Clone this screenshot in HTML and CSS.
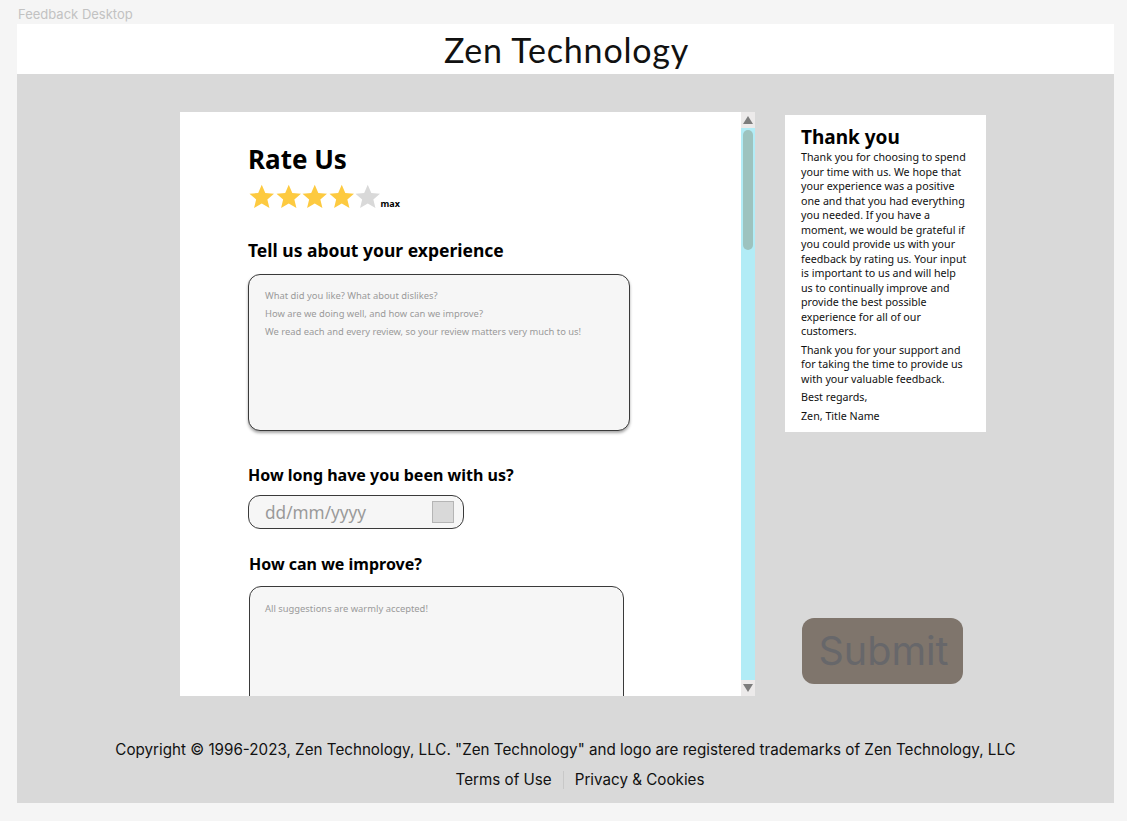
FILE: index.html
```html
<!DOCTYPE html>
<html lang="en">
<head>
    <meta charset="UTF-8">
    <meta name="viewport" content="width=device-width, initial-scale=1.0">
    <title>Feedback Desktop</title>
    <link rel="stylesheet" href="styles.css">
</head>
<body>
    <div class="frame-label">Feedback Desktop</div>
    <div class="frame">
        <div class="site-header">
            <h1>Zen Technology</h1>
        </div>

        <div class="main">
            <div class="form-panel">
                <div class="form-content">
                    <h2 class="rate-title">Rate Us</h2>
                    <div class="stars">
                        <svg class="star on" viewBox="0 0 24 24"><path d="M12 1.5l3.1 7.2 7.6.6-5.8 5 1.8 7.6L12 17.9l-6.7 4 1.8-7.6-5.8-5 7.6-.6z"/></svg>
                        <svg class="star on" viewBox="0 0 24 24"><path d="M12 1.5l3.1 7.2 7.6.6-5.8 5 1.8 7.6L12 17.9l-6.7 4 1.8-7.6-5.8-5 7.6-.6z"/></svg>
                        <svg class="star on" viewBox="0 0 24 24"><path d="M12 1.5l3.1 7.2 7.6.6-5.8 5 1.8 7.6L12 17.9l-6.7 4 1.8-7.6-5.8-5 7.6-.6z"/></svg>
                        <svg class="star on" viewBox="0 0 24 24"><path d="M12 1.5l3.1 7.2 7.6.6-5.8 5 1.8 7.6L12 17.9l-6.7 4 1.8-7.6-5.8-5 7.6-.6z"/></svg>
                        <svg class="star" viewBox="0 0 24 24"><path d="M12 1.5l3.1 7.2 7.6.6-5.8 5 1.8 7.6L12 17.9l-6.7 4 1.8-7.6-5.8-5 7.6-.6z"/></svg>
                        <span class="max">max</span>
                    </div>

                    <h3 class="question q-experience">Tell us about your experience</h3>
                    <div class="textbox experience">
                        <p>What did you like? What about dislikes?</p>
                        <p>How are we doing well, and how can we improve?</p>
                        <p>We read each and every review, so your review matters very much to us!</p>
                    </div>

                    <h3 class="question small q-long">How long have you been with us?</h3>
                    <div class="date-box">
                        <span>dd/mm/yyyy</span>
                        <span class="date-btn"></span>
                    </div>

                    <h3 class="question small q-improve">How can we improve?</h3>
                    <div class="textbox improve">
                        <p>All suggestions are warmly accepted!</p>
                    </div>
                </div>
                <div class="scrollbar">
                    <div class="arrow up"></div>
                    <div class="track">
                        <div class="thumb"></div>
                    </div>
                    <div class="arrow down"></div>
                </div>
            </div>

            <div class="side">
                <div class="thanks">
                    <h2>Thank you</h2>
                    <p>Thank you for choosing to spend your time with us. We hope that your experience was a positive one and that you had everything you needed. If you have a moment, we would be grateful if you could provide us with your feedback by rating us. Your input is important to us and will help us to continually improve and provide the best possible experience for all of our customers.</p>
                    <p>Thank you for your support and for taking the time to provide us with your valuable feedback.</p>
                    <p>Best regards,</p>
                    <p>Zen, Title Name</p>
                </div>
                <button class="submit-btn">Submit</button>
            </div>
        </div>

        <div class="site-footer">
            <p class="copyright">Copyright © 1996-2023, Zen Technology, LLC. "Zen Technology" and logo are registered trademarks of Zen Technology, LLC</p>
            <div class="links">
                <a href="#">Terms of Use</a>
                <span class="sep"></span>
                <a href="#">Privacy &amp; Cookies</a>
            </div>
        </div>
    </div>
</body>
</html>
```

FILE: styles.css
```css
body {
    margin: 0;
    background: #f5f5f5;
    font-family: 'Noto Sans', sans-serif;
}
.frame-label {
    font-family: 'Inter', sans-serif;
    font-size: 13px;
    color: #c2c2c2;
    padding: 6px 0 0 18px;
    height: 18px;
}
.frame {
    margin-left: 17px;
    width: 1097px;
    height: 779px;
    background: #d9d9d9;
    display: flex;
    flex-direction: column;
}
.site-header {
    height: 50px;
    background: white;
    display: flex;
    align-items: center;
    justify-content: center;
}
.site-header h1 {
    margin: 0;
    font-family: 'Lato', sans-serif;
    font-weight: 400;
    font-size: 34px;
    letter-spacing: 0.8px;
    color: #111;
    padding-left: 2px;
}
.main {
    display: flex;
    padding: 38px 0 0 163px;
    gap: 30px;
    height: 584px;
}
.form-panel {
    width: 575px;
    height: 584px;
    background: white;
    display: flex;
    overflow: hidden;
}
.form-content {
    flex: 1;
    padding: 28px 0 0 68px;
    overflow: hidden;
}
.rate-title {
    margin: 0;
    font-size: 26px;
    font-weight: 700;
    line-height: 38px;
    color: #000;
}
.stars {
    display: flex;
    align-items: flex-end;
    margin-top: 4px;
    height: 28px;
}
.star {
    width: 27.5px;
    height: 27.5px;
    margin-right: -1px;
    fill: #d9d9d9;
}
.star.on {
    fill: #fdca40;
}
.max {
    font-size: 9px;
    font-weight: 700;
    line-height: 10px;
    margin-left: 0;
    margin-bottom: 1px;
}
.question {
    margin: 0;
    font-size: 17.5px;
    font-weight: 700;
    line-height: 24px;
    color: #000;
}
.question.small {
    font-size: 16px;
}
.q-experience {
    margin-top: 28px;
}
.q-long {
    margin-top: 32px;
}
.q-improve {
    margin-top: 23px;
    margin-left: 1px;
}
.textbox {
    box-sizing: border-box;
    background: #f6f6f6;
    border: 1px solid #3a3a3a;
    border-radius: 12px;
    margin-top: 12px;
}
.textbox p {
    margin: 0;
    font-size: 9.4px;
    line-height: 18px;
    color: #9a9a9a;
}
.experience {
    width: 382px;
    height: 157px;
    padding: 12px 16px;
    box-shadow: 0 2px 3px rgba(0,0,0,0.35);
}
.improve {
    width: 375px;
    height: 140px;
    padding: 13px 15px;
    margin-top: 10px;
    margin-left: 1px;
}
.date-box {
    box-sizing: border-box;
    width: 216px;
    height: 34px;
    margin-top: 8px;
    border: 1px solid #3a3a3a;
    border-radius: 12px;
    background: #f6f6f6;
    display: flex;
    align-items: center;
    justify-content: space-between;
    padding: 0 9px 0 16px;
    font-size: 17.2px;
    color: #9a9a9a;
}
.date-btn {
    width: 20px;
    height: 20px;
    background: #d9d9d9;
    border: 1px solid #b5b5b5;
}
.scrollbar {
    width: 14px;
    display: flex;
    flex-direction: column;
    background: #eceaea;
}
.arrow {
    height: 16px;
    display: flex;
    align-items: center;
    justify-content: center;
}
.arrow.up::before,
.arrow.down::before {
    content: '';
    border-left: 5px solid transparent;
    border-right: 5px solid transparent;
}
.arrow.up::before {
    border-bottom: 8px solid #7d7d7d;
}
.arrow.down::before {
    border-top: 8px solid #7d7d7d;
}
.track {
    flex: 1;
    background: #b2ecf6;
    padding: 2px 2px;
}
.thumb {
    height: 120px;
    background: #9dc3bf;
    border-radius: 5px;
}
.side {
    width: 201px;
    padding-top: 3px;
    display: flex;
    flex-direction: column;
}
.thanks {
    background: white;
    padding: 9px 18px 9px 16px;
    height: 299px;
}
.thanks h2 {
    margin: 0;
    font-size: 19px;
    font-weight: 700;
    line-height: 26px;
    color: #000;
}
.thanks p {
    margin: 0 0 4px 0;
    font-size: 10.7px;
    line-height: 14.5px;
    color: #111;
}
.submit-btn {
    margin: 186px 0 0 17px;
    width: 161px;
    height: 66px;
    border: none;
    border-radius: 12px;
    background: #7f756c;
    color: #67676a;
    font-family: 'Inter', sans-serif;
    font-size: 39.5px;
    cursor: pointer;
    padding: 0 0 0 2px;
}
.site-footer {
    flex: 1;
    display: flex;
    flex-direction: column;
    align-items: center;
    padding-top: 44px;
    font-family: 'Inter', sans-serif;
    font-size: 15.2px;
    color: #111;
}
.copyright {
    margin: 0;
    line-height: 20px;
}
.links {
    display: flex;
    align-items: center;
    margin: 10px 0 0 29px;
    line-height: 20px;
}
.links a {
    color: #111;
    text-decoration: none;
}
.sep {
    width: 1px;
    height: 18px;
    background: #c8c8c8;
    margin: 0 11px;
}
```
